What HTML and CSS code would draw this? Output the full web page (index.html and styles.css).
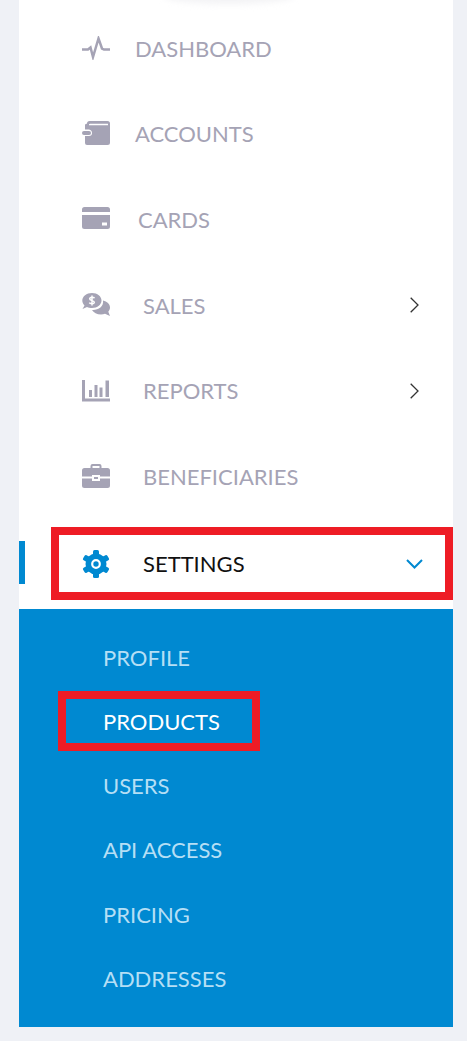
FILE: index.html
```html
<!DOCTYPE html>
<html lang="en">
<head>
    <meta charset="UTF-8">
    <title>Settings menu</title>
    <link rel="stylesheet" href="styles.css">
</head>
<body>
    <div class="sidebar">
        <div class="avatar-shadow"></div>
        <ul class="menu">
            <li class="row">
                <svg class="icon" viewBox="0 0 28 24"><path d="M0 13.500H6L8.500 11.500 11 21 16.500 2.500 20 12.500 22 13.500H28" fill="none" stroke="#a5a3b5" stroke-width="2.500"/></svg>
                <span class="label gap-small">DASHBOARD</span>
            </li>
            <li class="row">
                <svg class="icon" viewBox="0 0 28 26"><path d="M5 2.500Q5 0 7.500 0H25.500Q28 0 28 2.500V21.500Q28 24 25.500 24H5Q3 24 3 22V15H7Q10 15 10 12T7 8.500H3V3.500Z M7 3.200V4.200H26V2.800H8Z" fill="#a5a3b5" fill-rule="evenodd"/><rect x="0" y="10" width="9" height="4" rx="2" fill="#a5a3b5"/></svg>
                <span class="label gap-small">ACCOUNTS</span>
            </li>
            <li class="row">
                <svg class="icon" viewBox="0 0 28 24"><path d="M2.500 0H25.500Q28 0 28 2.500V5H0V2.500Q0 0 2.500 0ZM0 8H28V19.500Q28 22 25.500 22H2.500Q0 22 0 19.500ZM20 15.500V18.500H25V15.500Z" fill="#a5a3b5" fill-rule="evenodd"/></svg>
                <span class="label gap-mid">CARDS</span>
            </li>
            <li class="row">
                <svg class="icon" viewBox="0 0 28 24"><path d="M10 0C15.500 0 19.500 3.500 19.500 7.500S15.500 15 10 15C8 15 6.500 14.700 5 14L.5 16 2.500 12.500C1 11 .3 9.300 .3 7.500 .3 3.500 4.500 0 10 0Z" fill="#a5a3b5"/><path d="M21 7.500C25 8.500 28 11 28 14.500 28 16.200 27.300 17.500 26.300 18.800L28 23 23 20.800C21.800 21.300 20.500 21.500 19 21.500 15 21.500 11.500 19.500 10 17 16 17.500 22 13.500 21 7.500Z" fill="#a5a3b5"/><path d="M12.500 5.200C12 4 8 3.500 7.700 5.700 7.500 8.200 12.500 7 12.300 9.500 12 11.500 8 11 7.300 9.700M10 2.500V12.500" fill="none" stroke="#fff" stroke-width="1.500"/></svg>
                <span class="label gap-big">SALES</span>
                <svg class="arrow-right" viewBox="0 0 9 16"><path d="M.7 .7 8 8 .7 15.300" fill="none" stroke="#333" stroke-width="1.300"/></svg>
            </li>
            <li class="row">
                <svg class="icon" viewBox="0 0 28 22"><path d="M1.500 0V20H28" fill="none" stroke="#a5a3b5" stroke-width="3"/><path d="M7 10H10V17H7ZM12.500 5H15.500V17H12.500ZM17.500 7.500H20.500V17H17.500ZM23.500 .5H27V17H23.500Z" fill="#a5a3b5"/></svg>
                <span class="label gap-big">REPORTS</span>
                <svg class="arrow-right" viewBox="0 0 9 16"><path d="M.7 .7 8 8 .7 15.300" fill="none" stroke="#333" stroke-width="1.300"/></svg>
            </li>
            <li class="row">
                <svg class="icon" viewBox="0 0 28 24"><path d="M9.500 4V2Q9.500 1 10.500 1H17.500Q18.500 1 18.500 2V4" fill="none" stroke="#a5a3b5" stroke-width="2"/><path d="M2.500 4H25.500Q28 4 28 6.500V12.500H18V11H10V12.500H0V6.500Q0 4 2.500 4ZM0 14.500H10V17H18V14.500H28V21.500Q28 24 25.500 24H2.500Q0 24 0 21.500ZM12 13H16V15H12Z" fill="#a5a3b5"/></svg>
                <span class="label gap-big">BENEFICIARIES</span>
            </li>
            <li class="row row-active">
                <div class="marker"></div>
                <svg class="icon" viewBox="0 0 28 28"><circle cx="14" cy="14" r="10.500" fill="#0089d1"/><g fill="#0089d1"><rect x="11" y="0" width="6" height="6" rx="1.500"/><rect x="11" y="22" width="6" height="6" rx="1.500"/><rect x="11" y="0" width="6" height="6" rx="1.500" transform="rotate(60 14 14)"/><rect x="11" y="22" width="6" height="6" rx="1.500" transform="rotate(60 14 14)"/><rect x="11" y="0" width="6" height="6" rx="1.500" transform="rotate(120 14 14)"/><rect x="11" y="22" width="6" height="6" rx="1.500" transform="rotate(120 14 14)"/></g><circle cx="14" cy="14" r="3.800" fill="none" stroke="#fff" stroke-width="2.200"/></svg>
                <span class="label label-active gap-big">SETTINGS</span>
                <svg class="arrow-down" viewBox="0 0 17 10"><path d="M1 1 8.500 8.500 16 1" fill="none" stroke="#0089d1" stroke-width="2"/></svg>
                <div class="mark mark-settings"></div>
            </li>
        </ul>
        <ul class="submenu">
            <li class="sub-row">PROFILE</li>
            <li class="sub-row sub-active">PRODUCTS<div class="mark mark-products"></div></li>
            <li class="sub-row">USERS</li>
            <li class="sub-row">API ACCESS</li>
            <li class="sub-row">PRICING</li>
            <li class="sub-row">ADDRESSES</li>
        </ul>
    </div>
</body>
</html>
```

FILE: styles.css
```css
* {
    margin: 0;
    padding: 0;
    box-sizing: border-box;
}
ul {
    list-style: none;
}
html,
body {
    height: 1041px;
    overflow: hidden;
}
body {
    background-color: #eff1f6;
    font-family: "Lato", "Noto Sans", sans-serif;
    padding: 0 14px 14px 19px;
}
.sidebar {
    position: relative;
    height: 1027px;
    background-color: #fff;
    overflow: hidden;
    display: flex;
    flex-direction: column;
}
.avatar-shadow {
    position: absolute;
    left: 145px;
    top: -12px;
    width: 130px;
    height: 16px;
    border-radius: 50%;
    background-color: #f3f3f5;
    filter: blur(3px);
}
.menu {
    height: 609px;
    padding-top: 5.500px;
}
.row {
    position: relative;
    height: 85.600px;
    display: flex;
    align-items: center;
    padding-left: 63px;
    font-size: 22px;
    color: #a5a3b5;
}
.row-active {
    margin-top: 2px;
}
.icon {
    width: 28px;
    flex: none;
}
.label {
    flex: 1;
}
.gap-small {
    margin-left: 25px;
}
.gap-mid {
    margin-left: 28px;
}
.gap-big {
    margin-left: 33px;
}
.label-active {
    color: #111;
}
.arrow-right {
    width: 9px;
    height: 16px;
    margin-right: 34px;
}
.arrow-down {
    width: 17px;
    height: 10px;
    margin-right: 30px;
}
.marker {
    position: absolute;
    left: 0;
    top: 20px;
    width: 6px;
    height: 43px;
    background-color: #0089d1;
}
.mark {
    position: absolute;
    border: 8px solid #ee1c25;
}
.mark-settings {
    left: 32px;
    right: 0;
    top: 6px;
    height: 73px;
}
.submenu {
    flex: 1;
    background-color: #0089d1;
    padding-top: 16.800px;
}
.sub-row {
    position: relative;
    height: 64.200px;
    line-height: 64.200px;
    padding-left: 84px;
    font-size: 22px;
    color: #b5dff5;
}
.sub-active {
    color: #fff;
}
.mark-products {
    left: 39px;
    top: 1px;
    width: 202px;
    height: 60px;
}
```
